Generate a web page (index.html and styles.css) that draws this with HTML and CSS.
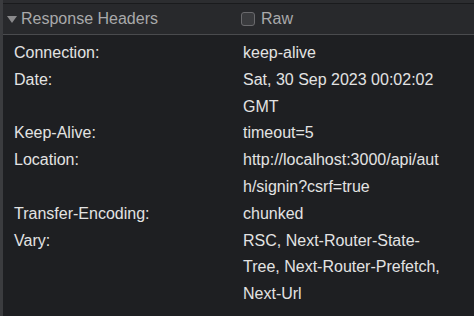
FILE: index.html
```html
<!DOCTYPE html>
<html>
<head>
<meta charset="utf-8">
<link rel="stylesheet" href="styles.css">
</head>
<body>
<div class="panel">
  <div class="topstrip"></div>
  <div class="header">
    <div class="title"><span class="tri"></span>Response Headers</div>
    <label class="raw"><span class="box"></span>Raw</label>
  </div>
  <div class="rows">
    <div class="row"><div class="k">Connection:</div><div class="v">keep-alive</div></div>
    <div class="row"><div class="k">Date:</div><div class="v">Sat, 30 Sep 2023 00:02:02 GMT</div></div>
    <div class="row"><div class="k">Keep-Alive:</div><div class="v">timeout=5</div></div>
    <div class="row"><div class="k">Location:</div><div class="v brk">http://localhost:3000/api/auth/signin?csrf=true</div></div>
    <div class="row"><div class="k">Transfer-Encoding:</div><div class="v">chunked</div></div>
    <div class="row"><div class="k">Vary:</div><div class="v">RSC, Next-Router-State-Tree, Next-Router-Prefetch, Next-Url</div></div>
  </div>
</div>
</body>
</html>
```
FILE: styles.css
```css
html, body {
  margin: 0;
  padding: 0;
  background: #1e1f22;
}
body {
  width: 474px;
  height: 316px;
  overflow: hidden;
  font-family: "Liberation Sans", Arial, sans-serif;
  font-size: 16px;
}
.panel {
  height: 316px;
  border-left: 3px solid #3b3c3f;
  box-sizing: border-box;
  background: #1e1f22;
}
.topstrip {
  height: 3px;
  background: #2c2d30;
  border-bottom: 1px solid #1a1b1d;
}
.header {
  height: 30px;
  background: #28292c;
  border-bottom: 1px solid #4a4b4e;
  display: flex;
  align-items: center;
  color: #a9a9ab;
}
.title {
  width: 238px;
  display: flex;
  align-items: center;
}
.tri {
  width: 0;
  height: 0;
  margin-left: 4px;
  margin-right: 4px;
  border-left: 5px solid transparent;
  border-right: 5px solid transparent;
  border-top: 7px solid #8a8a8c;
}
.raw {
  display: flex;
  align-items: center;
}
.box {
  width: 12px;
  height: 12px;
  border: 1.5px solid #6a6a6d;
  border-radius: 3px;
  background: #3a3b3e;
  margin-right: 6px;
}
.rows {
  padding-top: 5px;
  color: #e3e3e3;
}
.row {
  display: flex;
  line-height: 26.8px;
}
.k {
  width: 229px;
  padding-left: 11px;
  flex: none;
}
.v {
  width: 206px;
}
.brk {
  word-break: break-all;
}
```
